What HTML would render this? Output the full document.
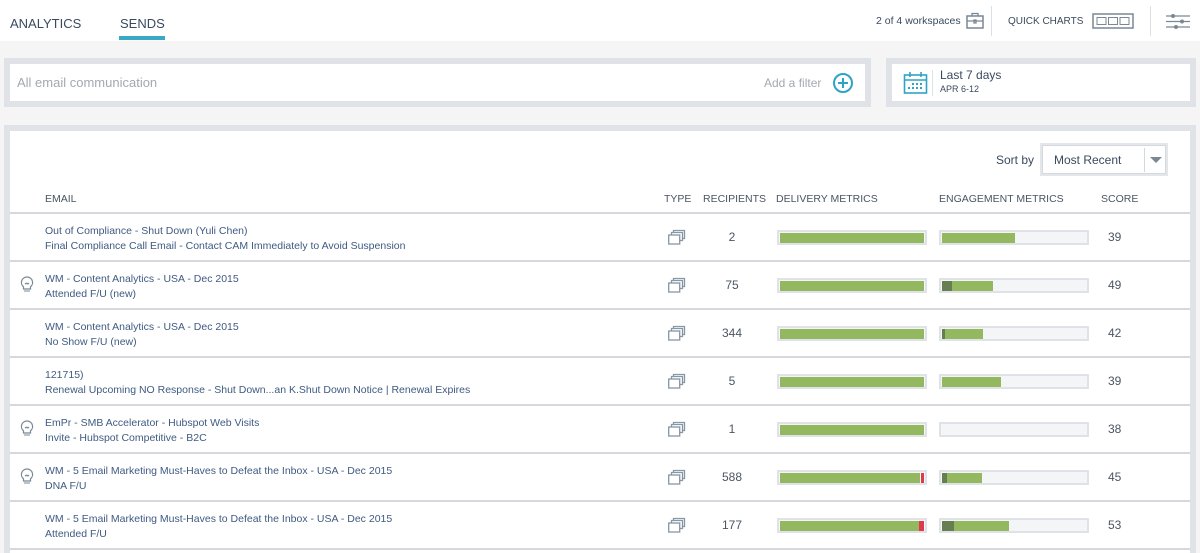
<!DOCTYPE html>
<html><head><meta charset="utf-8"><style>
*{margin:0;padding:0;box-sizing:border-box}
html,body{width:1200px;height:553px;overflow:hidden}
body{background:#f5f5f5;font-family:"Liberation Sans",sans-serif;color:#3f5673;position:relative}
.a{position:absolute}
.nav{left:0;top:0;width:1200px;height:41px;background:#fff}
.t{white-space:nowrap}
.box{background:#fff;border:6px solid #dfe2e6}
.row{position:absolute;left:10px;width:1180px;height:48px;border-top:2px solid #d5d9de;background:#fff}
.l1{position:absolute;left:35px;top:11px;font-size:10.5px;color:#3f5a82}
.l2{position:absolute;left:35px;top:26px;font-size:10.5px;color:#3f5a82}
.rc{position:absolute;left:692px;width:60px;text-align:center;top:16px;font-size:12px;color:#4a5563}
.sc{position:absolute;left:1098px;top:16px;font-size:12px;color:#4a5563}
.bar{position:absolute;top:16px;height:15px;width:150px;border:2px solid #dfe2e6;background:#f4f5f7}
.bar i{position:absolute;top:1px;height:10px;display:block}
.g{background:#93b85f}.d{background:#667e50}.r{background:#e0394b}
.ty{position:absolute;left:658px;top:15px}
.bulb{position:absolute;left:10px;top:14px}
.h{font-size:10.5px;color:#4a5563;top:193px}
</style></head><body>
<div class="a nav"></div>
<div class="a t" style="left:10px;top:16px;font-size:13px;color:#3a4a5e">ANALYTICS</div>
<div class="a t" style="left:120px;top:16px;font-size:13px;color:#3a4a5e">SENDS</div>
<div class="a" style="left:119px;top:36px;width:46px;height:4px;background:#3aa9c6"></div>
<div class="a t" style="left:876px;top:15px;font-size:10.5px;color:#3a4a5e">2 of 4 workspaces</div>
<svg class="a" style="left:966px;top:12px" width="18" height="17" viewBox="0 0 18 17"><rect x="1" y="4" width="16" height="12" fill="none" stroke="#7a8794" stroke-width="1.5"/><path d="M6 4V1.5h6V4M1 9h16M8 8h2v3H8z" fill="none" stroke="#7a8794" stroke-width="1.3"/></svg>
<div class="a" style="left:991px;top:6px;width:1px;height:30px;background:#dcdfe3"></div>
<div class="a t" style="left:1008px;top:16px;font-size:10px;color:#3a4a5e">QUICK CHARTS</div>
<svg class="a" style="left:1092px;top:13px" width="42" height="16"><rect x="1" y="1" width="40" height="14" fill="none" stroke="#7a8794" stroke-width="1.5"/><rect x="5" y="4.5" width="9" height="7" fill="none" stroke="#7a8794"/><rect x="16.5" y="4.5" width="9" height="7" fill="none" stroke="#7a8794"/><rect x="28" y="4.5" width="9" height="7" fill="none" stroke="#7a8794"/></svg>
<div class="a" style="left:1150px;top:6px;width:1px;height:30px;background:#dcdfe3"></div>
<svg class="a" style="left:1166px;top:12px" width="24" height="18"><path d="M0 4h24M0 9.5h24M0 15h24" stroke="#7a8794" stroke-width="1.3"/><circle cx="7" cy="4" r="2" fill="#7a8794"/><circle cx="16" cy="9.5" r="2" fill="#7a8794"/><circle cx="10" cy="15" r="2" fill="#7a8794"/></svg>

<div class="a box" style="left:4px;top:58px;width:867px;height:49px"></div>
<div class="a t" style="left:17px;top:75px;font-size:13px;color:#a2a9b1">All email communication</div>
<div class="a t" style="left:764px;top:76px;font-size:12px;color:#a2a9b1">Add a filter</div>
<svg class="a" style="left:832px;top:72px" width="22" height="22"><circle cx="11" cy="11" r="9" fill="none" stroke="#2fa3c4" stroke-width="2"/><path d="M11 6v10M6 11h10" stroke="#2fa3c4" stroke-width="2"/></svg>

<div class="a box" style="left:886px;top:58px;width:310px;height:49px"></div>
<svg class="a" style="left:903px;top:71px" width="26" height="24"><rect x="1.5" y="4" width="22" height="18" fill="none" stroke="#2fa3c4" stroke-width="1.6"/><path d="M1.5 9h22M7 1v5M18 1v5" stroke="#2fa3c4" stroke-width="1.6"/><g fill="#2fa3c4"><rect x="9" y="12" width="2" height="2"/><rect x="13" y="12" width="2" height="2"/><rect x="17" y="12" width="2" height="2"/><rect x="5" y="16" width="2" height="2"/><rect x="9" y="16" width="2" height="2"/><rect x="13" y="16" width="2" height="2"/><rect x="17" y="16" width="2" height="2"/></g></svg>
<div class="a" style="left:932px;top:70px;width:1px;height:26px;background:#e0e3e6"></div>
<div class="a t" style="left:940px;top:68px;font-size:12px;color:#3a4a5e">Last 7 days</div>
<div class="a t" style="left:940px;top:84px;font-size:9px;color:#3a4a5e">APR 6-12</div>

<div class="a" style="left:4px;top:125px;width:1192px;height:440px;background:#dfe2e6"></div>
<div class="a" style="left:10px;top:131px;width:1180px;height:430px;background:#fff"></div>
<div class="a t" style="left:996px;top:153px;font-size:12px;color:#3a4a5e">Sort by</div>
<div class="a" style="left:1040px;top:143px;width:128px;height:33px;background:#fff;border:3px solid #e4e7ea;outline:1px solid #d5d9de;outline-offset:-3px"></div>
<div class="a t" style="left:1054px;top:153px;font-size:12px;color:#3a4a5e">Most Recent</div>
<div class="a" style="left:1144px;top:148px;width:1px;height:24px;background:#d5d9de"></div>
<div class="a" style="left:1150px;top:157px;border-left:6px solid transparent;border-right:6px solid transparent;border-top:6px solid #7a8794"></div>

<div class="a t h" style="left:45px">EMAIL</div>
<div class="a t h" style="left:664px">TYPE</div>
<div class="a t h" style="left:703px">RECIPIENTS</div>
<div class="a t h" style="left:776px">DELIVERY METRICS</div>
<div class="a t h" style="left:939px">ENGAGEMENT METRICS</div>
<div class="a t h" style="left:1101px">SCORE</div>

<svg width="0" height="0" style="position:absolute"><defs>
<g id="ty"><path d="M5.5 4.5V1.5h11v8h-3" fill="none" stroke="#8796a5" stroke-width="1.3"/><path d="M3.5 6.5V3.5h11v8h-3" fill="#fff" stroke="#8796a5" stroke-width="1.3"/><rect x="0.7" y="6" width="11" height="9" fill="#fff" stroke="#8796a5" stroke-width="1.3"/></g>
<g id="bl"><path d="M7 1a5.5 5.5 0 0 0-3.5 9.8V13h7v-2.2A5.5 5.5 0 0 0 7 1z" fill="none" stroke="#7a8794" stroke-width="1.2"/><path d="M4 15h6M5 7l1 1 1-1 1 1 1-1" fill="none" stroke="#7a8794" stroke-width="1"/></g>
</defs></svg>

<div class="row" style="top:212px"><div class="l1 t">Out of Compliance - Shut Down (Yuli Chen)</div><div class="l2 t">Final Compliance Call Email - Contact CAM Immediately to Avoid Suspension</div><svg class="ty" width="18" height="16"><use href="#ty"/></svg><div class="rc">2</div><div class="bar" style="left:767px"><i class="g" style="left:1px;width:144px"></i></div><div class="bar" style="left:929px"><i class="g" style="left:1px;width:73px"></i></div><div class="sc">39</div></div>
<div class="row" style="top:260px"><svg class="bulb" width="14" height="17"><use href="#bl"/></svg><div class="l1 t">WM - Content Analytics - USA - Dec 2015</div><div class="l2 t">Attended F/U (new)</div><svg class="ty" width="18" height="16"><use href="#ty"/></svg><div class="rc">75</div><div class="bar" style="left:767px"><i class="g" style="left:1px;width:144px"></i></div><div class="bar" style="left:929px"><i class="g" style="left:1px;width:51px"></i><i class="d" style="left:1px;width:10px"></i></div><div class="sc">49</div></div>
<div class="row" style="top:308px"><div class="l1 t">WM - Content Analytics - USA - Dec 2015</div><div class="l2 t">No Show F/U (new)</div><svg class="ty" width="18" height="16"><use href="#ty"/></svg><div class="rc">344</div><div class="bar" style="left:767px"><i class="g" style="left:1px;width:144px"></i></div><div class="bar" style="left:929px"><i class="g" style="left:1px;width:41px"></i><i class="d" style="left:1px;width:3px"></i></div><div class="sc">42</div></div>
<div class="row" style="top:356px"><div class="l1 t">121715)</div><div class="l2 t">Renewal Upcoming NO Response - Shut Down...an K.Shut Down Notice | Renewal Expires</div><svg class="ty" width="18" height="16"><use href="#ty"/></svg><div class="rc">5</div><div class="bar" style="left:767px"><i class="g" style="left:1px;width:144px"></i></div><div class="bar" style="left:929px"><i class="g" style="left:1px;width:59px"></i></div><div class="sc">39</div></div>
<div class="row" style="top:404px"><svg class="bulb" width="14" height="17"><use href="#bl"/></svg><div class="l1 t">EmPr - SMB Accelerator - Hubspot Web Visits</div><div class="l2 t">Invite - Hubspot Competitive - B2C</div><svg class="ty" width="18" height="16"><use href="#ty"/></svg><div class="rc">1</div><div class="bar" style="left:767px"><i class="g" style="left:1px;width:144px"></i></div><div class="bar" style="left:929px"></div><div class="sc">38</div></div>
<div class="row" style="top:452px"><svg class="bulb" width="14" height="17"><use href="#bl"/></svg><div class="l1 t">WM - 5 Email Marketing Must-Haves to Defeat the Inbox - USA - Dec 2015</div><div class="l2 t">DNA F/U</div><svg class="ty" width="18" height="16"><use href="#ty"/></svg><div class="rc">588</div><div class="bar" style="left:767px"><i class="g" style="left:1px;width:140px"></i><i class="r" style="left:142px;width:3px"></i></div><div class="bar" style="left:929px"><i class="g" style="left:1px;width:40px"></i><i class="d" style="left:1px;width:5px"></i></div><div class="sc">45</div></div>
<div class="row" style="top:500px"><div class="l1 t">WM - 5 Email Marketing Must-Haves to Defeat the Inbox - USA - Dec 2015</div><div class="l2 t">Attended F/U</div><svg class="ty" width="18" height="16"><use href="#ty"/></svg><div class="rc">177</div><div class="bar" style="left:767px"><i class="g" style="left:1px;width:139px"></i><i class="r" style="left:140px;width:5px"></i></div><div class="bar" style="left:929px"><i class="g" style="left:1px;width:67px"></i><i class="d" style="left:1px;width:12px"></i></div><div class="sc">53</div></div>
<div class="a" style="left:10px;top:548px;width:1180px;height:2px;background:#d5d9de"></div>
</body></html>
